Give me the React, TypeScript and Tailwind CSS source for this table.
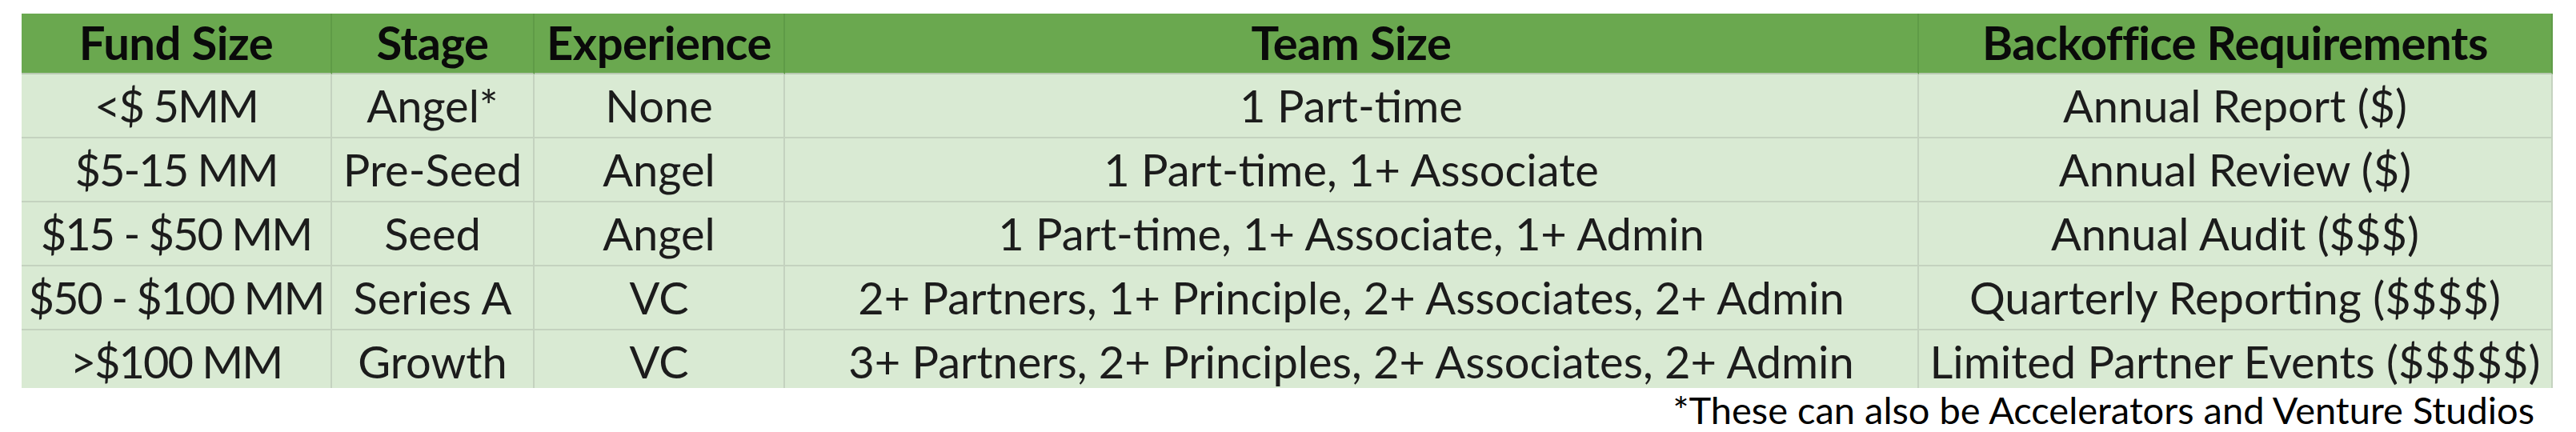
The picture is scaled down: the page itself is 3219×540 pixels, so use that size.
const COLUMNS = ['Fund Size', 'Stage', 'Experience', 'Team Size', 'Backoffice Requirements'];

const ROWS: string[][] = [
  ['<$ 5MM', 'Angel*', 'None', '1 Part-time', 'Annual Report ($)'],
  ['$5-15 MM', 'Pre-Seed', 'Angel', '1 Part-time, 1+ Associate', 'Annual Review ($)'],
  ['$15 - $50 MM', 'Seed', 'Angel', '1 Part-time, 1+ Associate, 1+ Admin', 'Annual Audit ($$$)'],
  ['$50 - $100 MM', 'Series A', 'VC', '2+ Partners, 1+ Principle, 2+ Associates, 2+ Admin', 'Quarterly Reporting ($$$$)'],
  ['>$100 MM', 'Growth', 'VC', '3+ Partners, 2+ Principles, 2+ Associates, 2+ Admin', 'Limited Partner Events ($$$$$)']
];

export default function App() {
  return (
    <div
      className="min-h-[540px] w-[3219px] bg-white pl-[27px] pt-[17px]"
      style={{ fontFamily: 'Lato, "Open Sans", sans-serif' }}
    >
      <div className="w-[3163px]">
        <div className="grid grid-cols-[388px_253px_313px_1417px_792px]">
          {COLUMNS.map((title) => (
            <div
              key={title}
              className="h-[76px] overflow-hidden whitespace-nowrap border-r-[2px] border-b-[2px] border-r-[#5f9b47] border-b-[#b8c9b1] bg-[#6aa84f] text-center text-[58px] font-bold leading-[72px] tracking-[-0.5px] text-[#0a0a0a] last:border-r-[#c6d3c1]"
            >
              {title}
            </div>
          ))}
          {ROWS.map((row, rowIndex) =>
            row.map((cell, cellIndex) => (
              <div
                key={`${rowIndex}-${cellIndex}`}
                className={`overflow-hidden whitespace-nowrap border-r-[2px] border-[#c4d2bf] bg-[#d9ead3] text-center text-[56px] leading-[78px] text-[#1c1c1c] ${
                  rowIndex === ROWS.length - 1 ? 'h-[72px]' : 'h-[80px] border-b-[2px]'
                } ${cellIndex === 0 ? 'tracking-[-2px]' : ''}`}
              >
                {cell}
              </div>
            ))
          )}
        </div>
        <div className="pr-[23px] text-right text-[47px] leading-[55px] text-black">
          *These can also be Accelerators and Venture Studios
        </div>
      </div>
    </div>
  );
}
